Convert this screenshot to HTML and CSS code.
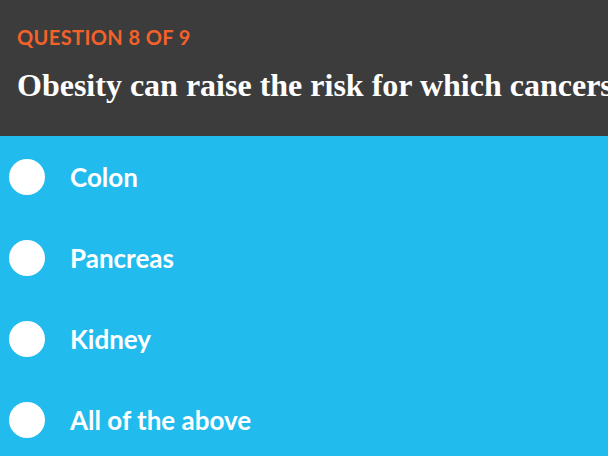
FILE: index.html
```html
<!DOCTYPE html>
<html lang="en">
<head>
    <meta charset="UTF-8">
    <meta name="viewport" content="width=device-width, initial-scale=1.0">
    <title>Quiz</title>
    <link rel="stylesheet" href="styles.css">
</head>
<body>
    <div class="question">
        <p class="count">Question 8 of 9</p>
        <h1 class="title">Obesity can raise the risk for which cancers?</h1>
    </div>

    <ul class="answers">
        <li class="answer"><span class="dot"></span>Colon</li>
        <li class="answer"><span class="dot"></span>Pancreas</li>
        <li class="answer"><span class="dot"></span>Kidney</li>
        <li class="answer"><span class="dot"></span>All of the above</li>
    </ul>
</body>
</html>
```

FILE: styles.css
```css
body {
    margin: 0;
    background-color: #22bbee;
    overflow: hidden;
}

.question {
    background-color: #3c3c3c;
    height: 136px;
    box-sizing: border-box;
    padding: 27px 0 0 17px;
    white-space: nowrap;
    overflow: hidden;
}

.count {
    margin: 0;
    color: #f4622a;
    font-family: Lato, sans-serif;
    font-weight: bold;
    font-size: 20px;
    line-height: 20px;
    letter-spacing: 0.4px;
    text-transform: uppercase;
}

.title {
    margin: 20px 0 0;
    color: #fff;
    font-family: "Liberation Serif", serif;
    font-weight: bold;
    font-size: 32px;
    line-height: 36px;
}

.answers {
    list-style: none;
    margin: 0;
    padding: 0;
}

.answer {
    display: flex;
    align-items: center;
    height: 81px;
    padding-left: 9px;
    color: #fff;
    font-family: Lato, sans-serif;
    font-weight: bold;
    font-size: 26px;
}

.dot {
    width: 36px;
    height: 36px;
    border-radius: 50%;
    background-color: #fff;
    margin-right: 25px;
    flex-shrink: 0;
}
```
